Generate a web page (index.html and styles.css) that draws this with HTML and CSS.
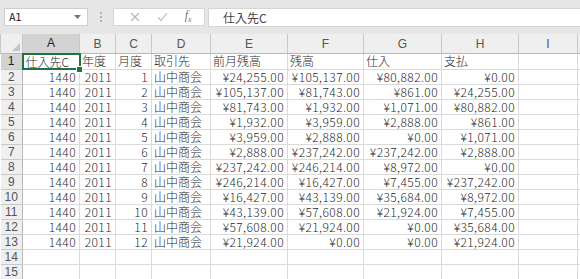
FILE: index.html
```html
<!DOCTYPE html>
<html lang="ja">
<head>
    <meta charset="UTF-8">
    <title>仕入先C</title>
    <link rel="stylesheet" href="styles.css">
</head>
<body>
    <div class="formula-bar">
        <div class="name-box">
            <span class="name-text">A1</span>
            <svg class="name-arrow" width="7" height="4" viewBox="0 0 7 4"><path d="M0 0 H7 L3.5 4 Z" fill="#777"/></svg>
        </div>
        <div class="bar-dots"><i></i><i></i><i></i></div>
        <div class="fx-buttons">
            <svg width="10" height="10" viewBox="0 0 10 10"><path d="M1 1 L9 9 M9 1 L1 9" stroke="#b5b5b5" stroke-width="1.1"/></svg>
            <svg width="11" height="10" viewBox="0 0 11 10"><path d="M1 5.5 L4 8.5 L10 1" stroke="#b5b5b5" stroke-width="1.1" fill="none"/></svg>
            <span class="fx">f<sub>x</sub></span>
        </div>
        <div class="formula-input">仕入先C</div>
    </div>

    <table class="sheet">
        <colgroup>
            <col style="width:22px"><col style="width:57px"><col style="width:36px"><col style="width:36px">
            <col style="width:59px"><col style="width:77px"><col style="width:76px"><col style="width:78px">
            <col style="width:77px"><col style="width:59px"><col style="width:3px">
        </colgroup>
        <thead>
            <tr>
                <th class="corner"><svg width="8" height="8" viewBox="0 0 8 8"><path d="M8 0 V8 H0 Z" fill="#c4c4c4"/></svg></th>
                <th class="active">A</th><th>B</th><th>C</th><th>D</th><th>E</th>
                <th>F</th><th>G</th><th>H</th><th>I</th><th></th>
            </tr>
        </thead>
        <tbody id="rows">
            <tr>
                <th class="active">1</th>
                <td class="selected">仕入先C<span class="handle"></span></td>
                <td>年度</td><td>月度</td><td>取引先</td><td>前月残高</td>
                <td>残高</td><td>仕入</td><td>支払</td><td></td><td></td>
            </tr>
        </tbody>
    </table>

    <script>
        const data = [
            ['¥24,255.00', '¥105,137.00', '¥80,882.00', '¥0.00'],
            ['¥105,137.00', '¥81,743.00', '¥861.00', '¥24,255.00'],
            ['¥81,743.00', '¥1,932.00', '¥1,071.00', '¥80,882.00'],
            ['¥1,932.00', '¥3,959.00', '¥2,888.00', '¥861.00'],
            ['¥3,959.00', '¥2,888.00', '¥0.00', '¥1,071.00'],
            ['¥2,888.00', '¥237,242.00', '¥237,242.00', '¥2,888.00'],
            ['¥237,242.00', '¥246,214.00', '¥8,972.00', '¥0.00'],
            ['¥246,214.00', '¥16,427.00', '¥7,455.00', '¥237,242.00'],
            ['¥16,427.00', '¥43,139.00', '¥35,684.00', '¥8,972.00'],
            ['¥43,139.00', '¥57,608.00', '¥21,924.00', '¥7,455.00'],
            ['¥57,608.00', '¥21,924.00', '¥0.00', '¥35,684.00'],
            ['¥21,924.00', '¥0.00', '¥0.00', '¥21,924.00']
        ];

        const rowsElement = document.getElementById('rows');
        let html = '';

        data.forEach((money, i) => {
            html += `<tr><th>${i + 2}</th>` +
                `<td class="num">1440</td><td class="num">2011</td><td class="num">${i + 1}</td>` +
                `<td>山中商会</td>` +
                money.map(m => `<td class="num">${m}</td>`).join('') +
                `<td></td><td></td></tr>`;
        });

        // filas vacías 14 y 15
        for (let n = 14; n <= 15; n++) {
            html += `<tr><th>${n}</th>` + '<td></td>'.repeat(10) + '</tr>';
        }

        rowsElement.insertAdjacentHTML('beforeend', html);
    </script>
</body>
</html>
```

FILE: styles.css
```css
:root {
    --gris-barra: #e6e6e6;
    --gris-cabecera: #efefef;
    --gris-activo: #d3d3d3;
    --linea: #dadada;
    --linea-cabecera: #c8c8c8;
    --verde: #217346;
    --texto: #2a2a2a;
    --texto-cabecera: #555;
}

body {
    margin: 0;
    width: 580px;
    height: 279px;
    overflow: hidden;
    background: #fff;
    font-family: "Noto Sans CJK JP", "Noto Sans", sans-serif;
    color: var(--texto);
}

/* --- barra de fórmulas --- */
.formula-bar {
    height: 34px;
    background: var(--gris-barra);
    display: flex;
    align-items: center;
    padding: 0 0 0 4px;
    box-sizing: border-box;
}

.name-box {
    width: 84px;
    height: 18px;
    background: #fff;
    border: 1px solid #cfcfcf;
    box-sizing: border-box;
    display: flex;
    align-items: center;
    justify-content: space-between;
    padding: 0 6px 0 4px;
}

.name-text {
    font-family: "DejaVu Sans Mono", monospace;
    font-size: 11px;
    color: #333;
    letter-spacing: -0.5px;
}

.bar-dots {
    width: 25px;
    display: flex;
    flex-direction: column;
    align-items: center;
    gap: 2px;
}

.bar-dots i {
    width: 2px;
    height: 2px;
    background: #b0b0b0;
}

.fx-buttons {
    width: 92px;
    height: 18px;
    background: #fff;
    border: 1px solid #d6d6d6;
    box-sizing: border-box;
    display: flex;
    align-items: center;
    justify-content: space-around;
    padding: 0 4px 0 8px;
}

.fx {
    font-family: "Liberation Serif", serif;
    font-style: italic;
    font-size: 12px;
    color: #777;
    line-height: 1;
}

.fx sub {
    font-size: 8px;
}

.formula-input {
    flex: 1;
    height: 19px;
    margin-left: 3px;
    background: #fff;
    border: 1px solid #d6d6d6;
    border-right: none;
    box-sizing: border-box;
    font-size: 12px;
    line-height: 17px;
    padding-left: 14px;
    color: #444;
}

/* --- hoja --- */
.sheet {
    border-collapse: collapse;
    table-layout: fixed;
    width: 580px;
    font-size: 12px;
}

.sheet th {
    background: var(--gris-cabecera);
    color: var(--texto-cabecera);
    font-family: "Liberation Sans", sans-serif;
    font-weight: normal;
    font-size: 12px;
    border: 1px solid var(--linea-cabecera);
    border-top: none;
    padding: 0;
    text-align: center;
}

.sheet thead th {
    height: 17px;
    line-height: 16px;
    border-bottom: 1px solid #b8b8b8;
}

.sheet thead th.corner {
    text-align: right;
    vertical-align: bottom;
    padding: 0 2px 2px 0;
    line-height: 0;
}

.sheet tbody th {
    border-left: none;
    border-right: 1px solid #b8b8b8;
}

.sheet th.active {
    background: var(--gris-activo);
    color: #222;
}

.sheet thead th.active {
    border-bottom: 2px solid var(--verde);
}

.sheet tbody th.active {
    border-right: 2px solid var(--verde);
}

.sheet td {
    height: 14px;
    padding: 0 2px;
    line-height: 14px;
    border: 1px solid var(--linea);
    white-space: nowrap;
    overflow: hidden;
    font-size: 12px;
    font-weight: 300;
}

.sheet tbody tr {
    height: 15px;
}

.sheet td.num {
    text-align: right;
    padding-right: 3px;
    letter-spacing: 0.4px;
}

.sheet td.selected {
    position: relative;
    overflow: visible;
    outline: 2px solid var(--verde);
    outline-offset: -1px;
}

.handle {
    position: absolute;
    right: -4px;
    bottom: -4px;
    width: 5px;
    height: 5px;
    background: var(--verde);
    border: 1px solid #fff;
}
```
